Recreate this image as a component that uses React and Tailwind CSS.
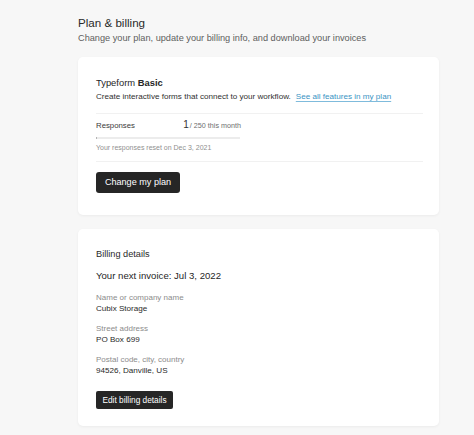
import React from "react";

function Field({ label, value }) {
  return (
    <div className="mt-[9px]">
      <p className="text-[8px] leading-[11px] text-[#8c8c8c]">{label}</p>
      <p className="text-[8.1px] leading-[11px] text-[#2a2a2a]">{value}</p>
    </div>
  );
}

export default function App() {
  return (
    <div
      className="min-h-screen bg-[#f7f7f7] pl-[78px] pt-[15px] pb-[10px]"
      style={{ fontFamily: "'Liberation Sans', Arial, sans-serif" }}
    >
      <div className="w-[361px]">
        {/* Header */}
        <h1 className="text-[11.6px] leading-[16px] text-[#2a2a2a]">Plan &amp; billing</h1>
        <p className="text-[9.2px] leading-[14px] text-[#5e5e5e]">
          Change your plan, update your billing info, and download your invoices
        </p>

        {/* Plan card */}
        <div className="mt-[12px] rounded-[5px] bg-white px-[18px] pt-[19px] pb-[22px] shadow-[0_1px_3px_rgba(0,0,0,0.05)]">
          <h2 className="text-[9.4px] leading-[14px] text-[#262626]">
            Typeform <span className="font-bold">Basic</span>
          </h2>
          <p className="mt-[1px] text-[8.1px] leading-[12px] text-[#303030]">
            Create interactive forms that connect to your workflow.
            <span className="ml-[5px] text-[#3a94c4] underline decoration-[#7fbbdc] underline-offset-2">
              See all features in my plan
            </span>
          </p>
          <div className="mt-[10px] mr-[-2px] border-t border-[#f1f1f1]" />

          <div className="mt-[3px] w-[144px]">
            <div className="flex items-baseline justify-between leading-[12px]">
              <span className="text-[7.8px] text-[#3a3a3a]">Responses</span>
              <span className="mr-[-1px] text-[#333]">
                <span className="text-[10px]">1</span>
                <span className="ml-[1px] text-[7.2px] text-[#6e6e6e]">/ 250 this month</span>
              </span>
            </div>
            <div className="mt-[5px] h-[2px] w-full bg-[#ececec]">
              <div className="h-full w-[1px] bg-[#b5b5b5]" />
            </div>
          </div>
          <p className="mt-[4px] text-[7px] leading-[9px] text-[#909090]">
            Your responses reset on Dec 3, 2021
          </p>
          <div className="mt-[9px] mr-[-2px] border-t border-[#f1f1f1]" />

          <button className="mt-[10px] h-[21px] w-[84px] rounded-[3px] bg-[#262626] text-[9.1px] text-white">
            Change my plan
          </button>
        </div>

        {/* Billing card */}
        <div className="mt-[14px] rounded-[5px] bg-white px-[18px] pt-[19px] pb-[16px] shadow-[0_1px_3px_rgba(0,0,0,0.05)]">
          <h2 className="text-[9.2px] leading-[12px] text-[#2a2a2a]">Billing details</h2>
          <p className="mt-[9px] text-[9.6px] leading-[14px] text-[#262626]">
            Your next invoice: Jul 3, 2022
          </p>
          <Field label="Name or company name" value="Cubix Storage" />
          <div className="mt-[1px]">
            <Field label="Street address" value="PO Box 699" />
          </div>
          <Field label="Postal code, city, country" value="94526, Danville, US" />
          <button className="mt-[15px] h-[18px] w-[77px] rounded-[2px] bg-[#262626] text-[8.3px] text-white">
            Edit billing details
          </button>
        </div>
      </div>
    </div>
  );
}
